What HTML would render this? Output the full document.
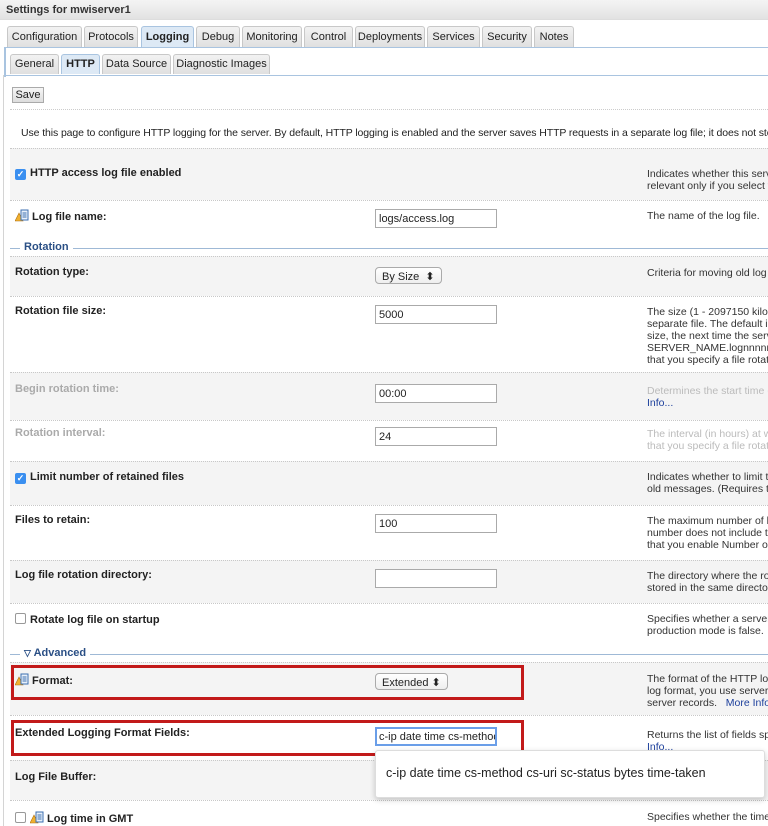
<!DOCTYPE html>
<html><head><meta charset="utf-8"><style>
*{box-sizing:border-box;margin:0;padding:0}
html,body{width:768px;height:826px;overflow:hidden}
body{background:#fff;font-family:"Liberation Sans",sans-serif;font-size:11px;color:#222;position:relative}
#w{position:absolute;left:0;top:0;width:768px;height:826px;overflow:hidden}
.a{position:absolute;white-space:nowrap}
.hdr{left:0;top:0;width:768px;height:20px;background:linear-gradient(#f4f4f4,#e2e2e2);border-bottom:1px solid #ddd}
.tab{position:absolute;top:26px;height:21px;border:1px solid #c8c8c8;border-bottom:none;background:linear-gradient(#f2f2f2,#e0e0e0);border-radius:3px 3px 0 0;text-align:center;line-height:20px}
.tab.on{background:#dde9f5;border-color:#a9c4e0;font-weight:bold}
.st{position:absolute;top:54px;height:20px;border:1px solid #c8c8c8;border-bottom:none;background:linear-gradient(#f2f2f2,#e0e0e0);border-radius:3px 3px 0 0;text-align:center;line-height:19px}
.st.on{background:#dde9f5;border-color:#a9c4e0;font-weight:bold}
.row{position:absolute;left:10px;width:758px;border-top:1px dotted #c8c8c8}
.g{background:#f4f4f4}
.lb{position:absolute;left:15px;font-weight:bold;white-space:nowrap}
.dis{color:#aaa}
.ds{position:absolute;left:647px;line-height:12px;color:#333;white-space:nowrap;font-size:10.5px}
.inp{position:absolute;left:375px;width:122px;height:19px;border:1px solid #aaa;background:#fff;padding:3px 3px;font-size:11px;white-space:nowrap;overflow:hidden}
.sel{position:absolute;left:375px;height:17px;border:1px solid #aaa;border-radius:4px;background:linear-gradient(#fff,#eee);padding:2px 6px;font-size:11px;white-space:nowrap}
.cb{display:inline-block;width:11px;height:11px;border-radius:2px;vertical-align:-1px;margin-right:4px}
.cb.on{background:#3a8ff0;color:#fff;font-size:9px;line-height:11px;text-align:center}
.cb.off{border:1px solid #999;background:#fff}
.ic{display:inline-block;width:14px;height:14px;vertical-align:-3px;margin-right:3px}
.leg{position:absolute;left:10px;width:758px;height:1px;background:#9fb9d6}
.legt{position:absolute;background:#fff;color:#2a4f85;font-weight:bold;padding:0 4px;white-space:nowrap}
a{color:#1c3f9c;text-decoration:none}
.red{position:absolute;left:11px;width:513px;border:3px solid #c21a1a}
</style></head><body><div id="w">
<div class="a hdr"></div>
<div class="a" style="left:6px;top:4px;font-weight:bold;color:#333">Settings for mwiserver1</div>
<div class="a" style="left:4px;top:47px;width:764px;height:1px;background:#a9c4e0"></div>
<div class="a" style="left:4px;top:47px;width:2px;height:30px;background:#a9c4e0"></div>
<div class="tab" style="left:7px;width:75px">Configuration</div>
<div class="tab" style="left:84px;width:54px">Protocols</div>
<div class="tab on" style="left:141px;width:53px">Logging</div>
<div class="tab" style="left:196px;width:44px">Debug</div>
<div class="tab" style="left:242px;width:60px">Monitoring</div>
<div class="tab" style="left:304px;width:49px">Control</div>
<div class="tab" style="left:355px;width:70px">Deployments</div>
<div class="tab" style="left:427px;width:53px">Services</div>
<div class="tab" style="left:482px;width:50px">Security</div>
<div class="tab" style="left:534px;width:40px">Notes</div>
<div class="st" style="left:10px;width:49px">General</div>
<div class="st on" style="left:61px;width:39px">HTTP</div>
<div class="st" style="left:102px;width:69px">Data Source</div>
<div class="st" style="left:173px;width:97px">Diagnostic Images</div>
<div class="a" style="left:4px;top:75px;width:764px;height:1px;background:#a9c4e0"></div>
<div class="a" style="left:3px;top:75px;width:1px;height:751px;background:#d4d4d4"></div>
<div class="a" style="left:12px;top:87px;width:32px;height:16px;border:1px solid #aaa;background:linear-gradient(#f6f6f6,#ddd);text-align:center;line-height:14px">Save</div>
<div class="a" style="left:10px;top:109px;width:758px;border-top:1px dotted #ccc"></div>
<div class="a" style="left:21px;top:127px;font-size:10.5px;letter-spacing:-0.1px">Use this page to configure HTTP logging for the server. By default, HTTP logging is enabled and the server saves HTTP requests in a separate log file; it does not store</div>

<div class="row g" style="top:148px;height:52px"></div>
<div class="lb" style="top:167px"><span class="cb on">✓</span>HTTP access log file enabled</div>
<div class="ds" style="top:168px">Indicates whether this serv<br>relevant only if you select t</div>

<div class="row" style="top:200px;height:38px"></div>
<div class="lb" style="top:209px"><svg class="ic" viewBox="0 0 14 14"><path d="M4 4L8 12H0Z" fill="#f0b030" stroke="#b07010" stroke-width=".6"/><rect x="6" y="1" width="7" height="10" fill="#e8f0fa" stroke="#3c6fb0"/><path d="M7.5 4h4M7.5 6h4M7.5 8h4" stroke="#3c6fb0"/></svg>Log file name:</div>
<div class="inp" style="top:209px">logs/access.log</div>
<div class="ds" style="top:210px">The name of the log file. &nbsp;&nbsp;I</div>

<div class="leg" style="top:248px"></div>
<div class="legt" style="left:20px;top:241px">Rotation</div>

<div class="row g" style="top:256px;height:40px"></div>
<div class="lb" style="top:266px">Rotation type:</div>
<div class="sel" style="top:267px">By Size &nbsp;⬍</div>
<div class="ds" style="top:267px">Criteria for moving old log r</div>

<div class="row" style="top:296px;height:76px"></div>
<div class="lb" style="top:305px">Rotation file size:</div>
<div class="inp" style="top:305px">5000</div>
<div class="ds" style="top:306px">The size (1 - 2097150 kilob<br>separate file. The default is<br>size, the next time the serv<br>SERVER_NAME.lognnnnn a<br>that you specify a file rotati</div>

<div class="row g" style="top:372px;height:48px"></div>
<div class="lb dis" style="top:383px">Begin rotation time:</div>
<div class="inp" style="top:384px">00:00</div>
<div class="ds" style="top:385px"><span style="color:#bbb">Determines the start time (</span><br><a>Info...</a></div>

<div class="row" style="top:420px;height:40px"></div>
<div class="lb dis" style="top:427px">Rotation interval:</div>
<div class="inp" style="top:427px">24</div>
<div class="ds" style="top:428px;color:#bbb">The interval (in hours) at w<br>that you specify a file rotati</div>

<div class="row g" style="top:461px;height:44px"></div>
<div class="lb" style="top:471px"><span class="cb on">✓</span>Limit number of retained files</div>
<div class="ds" style="top:471px">Indicates whether to limit t<br>old messages. (Requires th</div>

<div class="row" style="top:505px;height:55px"></div>
<div class="lb" style="top:514px">Files to retain:</div>
<div class="inp" style="top:514px">100</div>
<div class="ds" style="top:515px">The maximum number of lo<br>number does not include th<br>that you enable Number of</div>

<div class="row g" style="top:560px;height:43px"></div>
<div class="lb" style="top:569px">Log file rotation directory:</div>
<div class="inp" style="top:569px"></div>
<div class="ds" style="top:570px">The directory where the rot<br>stored in the same director</div>

<div class="row" style="top:603px;height:42px"></div>
<div class="lb" style="top:613px"><span class="cb off"></span>Rotate log file on startup</div>
<div class="ds" style="top:613px">Specifies whether a server<br>production mode is false.</div>

<div class="leg" style="top:654px"></div>
<div class="legt" style="left:20px;top:647px"><span style="font-size:9px">▽</span> Advanced</div>

<div class="row g" style="top:662px;height:53px"></div>
<div class="red" style="top:665px;height:35px"></div>
<div class="lb" style="top:673px"><svg class="ic" viewBox="0 0 14 14"><path d="M4 4L8 12H0Z" fill="#f0b030" stroke="#b07010" stroke-width=".6"/><rect x="6" y="1" width="7" height="10" fill="#e8f0fa" stroke="#3c6fb0"/><path d="M7.5 4h4M7.5 6h4M7.5 8h4" stroke="#3c6fb0"/></svg>Format:</div>
<div class="sel" style="top:673px">Extended ⬍</div>
<div class="ds" style="top:673px">The format of the HTTP log<br>log format, you use server c<br>server records. &nbsp;&nbsp;<a>More Info.</a></div>

<div class="row" style="top:715px;height:45px"></div>
<div class="red" style="top:720px;height:36px"></div>
<div class="lb" style="top:727px">Extended Logging Format Fields:</div>
<div class="inp" style="top:727px;border:2px solid #6a9ee8;padding:2px 2px">c-ip date time cs-method</div>
<div class="ds" style="top:729px">Returns the list of fields spe<br><a>Info...</a></div>

<div class="row g" style="top:760px;height:40px"></div>
<div class="lb" style="top:771px">Log File Buffer:</div>

<div class="row" style="top:800px;height:26px"></div>
<div class="lb" style="top:811px"><span class="cb off"></span><svg class="ic" viewBox="0 0 14 14"><path d="M4 4L8 12H0Z" fill="#f0b030" stroke="#b07010" stroke-width=".6"/><rect x="6" y="1" width="7" height="10" fill="#e8f0fa" stroke="#3c6fb0"/><path d="M7.5 4h4M7.5 6h4M7.5 8h4" stroke="#3c6fb0"/></svg>Log time in GMT</div>
<div class="ds" style="top:811px">Specifies whether the time</div>

<div class="a" style="left:375px;top:750px;width:390px;height:48px;background:#fff;border:1px solid #ddd;border-radius:3px;box-shadow:0 2px 6px rgba(0,0,0,.2);font-size:12.5px;padding:15px 0 0 10px;color:#222">c-ip date time cs-method cs-uri sc-status bytes time-taken</div>
</div></body></html>
